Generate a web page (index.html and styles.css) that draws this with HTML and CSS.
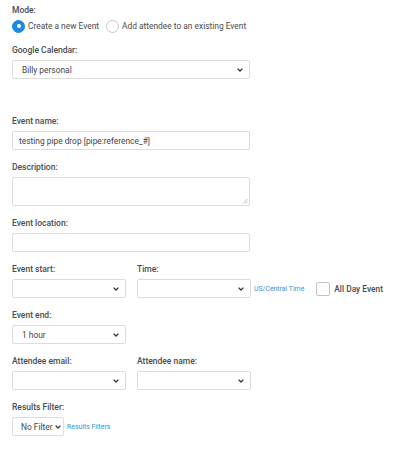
FILE: index.html
```html
<!DOCTYPE html>
<html>
<head>
<meta charset="utf-8">
<link rel="stylesheet" href="styles.css">
</head>
<body>
<div class="form">
  <div class="group">
    <div class="label">Mode:</div>
    <div class="radios">
      <span class="radio checked"></span><span class="rtext">Create a new Event</span>
      <span class="radio"></span><span class="rtext">Add attendee to an existing Event</span>
    </div>
  </div>
  <div class="group gap-big">
    <div class="label">Google Calendar:</div>
    <div class="select full"><span class="val">Billy personal</span><svg class="chev" viewBox="0 0 6 4" width="6" height="4"><path d="M0.6 0.6 L3 3 L5.4 0.6" fill="none" stroke="#333" stroke-width="1.3"/></svg></div>
  </div>
  <div class="group">
    <div class="label">Event name:</div>
    <div class="input full"><span class="val">testing pipe drop [pipe:reference_#]</span></div>
  </div>
  <div class="group">
    <div class="label">Description:</div>
    <div class="textarea full"><svg class="grip" viewBox="0 0 6 6" width="6" height="6"><path d="M5.5 1 L1 5.5 M5.5 3.5 L3.5 5.5" stroke="#aaa" stroke-width="0.8"/></svg></div>
  </div>
  <div class="group">
    <div class="label">Event location:</div>
    <div class="input full"></div>
  </div>
  <div class="group row">
    <div class="col">
      <div class="label">Event start:</div>
      <div class="select half"><span class="val"></span><svg class="chev" viewBox="0 0 6 4" width="6" height="4"><path d="M0.6 0.6 L3 3 L5.4 0.6" fill="none" stroke="#333" stroke-width="1.3"/></svg></div>
    </div>
    <div class="col">
      <div class="label">Time:</div>
      <div class="inline">
        <div class="select half"><span class="val"></span><svg class="chev" viewBox="0 0 6 4" width="6" height="4"><path d="M0.6 0.6 L3 3 L5.4 0.6" fill="none" stroke="#333" stroke-width="1.3"/></svg></div>
        <span class="link tz">US/Central Time</span>
        <span class="checkbox"></span><span class="cbtext">All Day Event</span>
      </div>
    </div>
  </div>
  <div class="group">
    <div class="label">Event end:</div>
    <div class="select half"><span class="val">1 hour</span><svg class="chev" viewBox="0 0 6 4" width="6" height="4"><path d="M0.6 0.6 L3 3 L5.4 0.6" fill="none" stroke="#333" stroke-width="1.3"/></svg></div>
  </div>
  <div class="group row">
    <div class="col">
      <div class="label">Attendee email:</div>
      <div class="select half"><span class="val"></span><svg class="chev" viewBox="0 0 6 4" width="6" height="4"><path d="M0.6 0.6 L3 3 L5.4 0.6" fill="none" stroke="#333" stroke-width="1.3"/></svg></div>
    </div>
    <div class="col">
      <div class="label">Attendee name:</div>
      <div class="select half"><span class="val"></span><svg class="chev" viewBox="0 0 6 4" width="6" height="4"><path d="M0.6 0.6 L3 3 L5.4 0.6" fill="none" stroke="#333" stroke-width="1.3"/></svg></div>
    </div>
  </div>
  <div class="group">
    <div class="label">Results Filter:</div>
    <div class="inline">
      <div class="select small"><span class="val">No Filter</span><svg class="chev tight" viewBox="0 0 6 4" width="6" height="4"><path d="M0.6 0.6 L3 3 L5.4 0.6" fill="none" stroke="#333" stroke-width="1.3"/></svg></div>
      <span class="link rf">Results Filters</span>
    </div>
  </div>
</div>
</body>
</html>
```
FILE: styles.css
```css
html, body {
  margin: 0;
  padding: 0;
  background: #fff;
}
body {
  font-family: Roboto, "Liberation Sans", sans-serif;
  font-size: 8px;
  color: #3a3a3a;
}
.form {
  padding: 4px 0 0 12px;
}
.group {
  margin-bottom: 11px;
}
.group.gap-big {
  margin-bottom: 36px;
}
.label {
  font-weight: 500;
  font-size: 8.5px;
  line-height: 12px;
  color: #474c52;
  margin-bottom: 4px;
}
.radios {
  display: flex;
  align-items: center;
  height: 14px;
  margin-top: -1px;
}
.radio {
  width: 11px;
  height: 11px;
  border-radius: 50%;
  border: 1px solid #c8c8c8;
  background: #fff;
  box-sizing: content-box;
  flex: none;
  position: relative;
}
.radio.checked {
  background: #1e88e5;
  border-color: #1e88e5;
}
.radio.checked::after {
  content: "";
  position: absolute;
  left: 3.5px;
  top: 3.5px;
  width: 4px;
  height: 4px;
  border-radius: 50%;
  background: #fff;
}
.rtext {
  margin-left: 3px;
  margin-right: 7px;
  color: #4a4a4a;
  font-size: 8.4px;
}
.select, .input, .textarea {
  box-sizing: border-box;
  border: 1px solid #dcdcdc;
  border-radius: 2px;
  background: #fff;
  height: 19px;
  display: flex;
  align-items: center;
  padding: 0 6px 0 9px;
}
.input {
  padding-left: 6px;
}
.full {
  width: 238px;
}
.half {
  width: 114px;
}
.small {
  width: 52px;
  padding-left: 8px;
  padding-right: 3px;
}
.textarea {
  height: 29px;
  position: relative;
}
.grip {
  position: absolute;
  right: 1px;
  bottom: 1px;
}
.val {
  flex: 1;
  color: #444;
  font-size: 8.4px;
  white-space: nowrap;
}
.chev {
  flex: none;
}
.chev.tight {
  margin-left: 2px;
}
.row {
  display: flex;
  gap: 11px;
}
.inline {
  display: flex;
  align-items: center;
}
.link {
  color: #3d8fd6;
  font-size: 6.9px;
  white-space: nowrap;
}
.tz {
  margin-left: 3px;
}
.rf {
  margin-left: 3px;
}
.checkbox {
  width: 12px;
  height: 12px;
  border: 1px solid #c4c4c4;
  border-radius: 2px;
  margin-left: 12px;
  flex: none;
}
.cbtext {
  margin-left: 4px;
  font-weight: 500;
  font-size: 8.4px;
  color: #474c52;
  white-space: nowrap;
}
```
